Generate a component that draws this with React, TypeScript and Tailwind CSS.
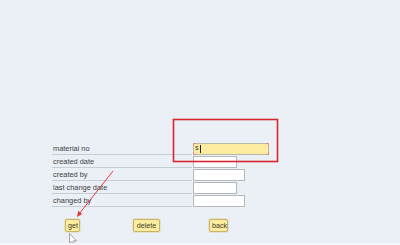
import React from "react"

const rows = [
  { label: "material no", w: "w-[76px]", value: "s", active: true },
  { label: "created date", w: "w-[44px]", value: "" },
  { label: "created by", w: "w-[52px]", value: "" },
  { label: "last change date", w: "w-[44px]", value: "" },
  { label: "changed by", w: "w-[52px]", value: "" },
]

function Corner(props: { className: string }) {
  return <span className={"absolute w-[3px] h-[3px] border-[#e28a8a] " + props.className} />
}

function Btn(props: { label: string; className: string }) {
  return (
    <button className={"h-[13px] px-[2px] bg-[#fcec9e] border border-[#c7b36c] rounded-[2px] shadow-[0_0_0_1px_#e6e2cf] text-[7.2px] leading-[11px] text-[#3a3a2a] " + props.className}>
      {props.label}
    </button>
  )
}

export default function App() {
  return (
    <div className="relative w-[400px] h-[245px] bg-[#eaf0f6] overflow-hidden border-b-2 border-[#f4f7fa]" style={{ fontFamily: '"Liberation Sans", Arial, sans-serif' }}>
      <div className="pt-[142px] pl-[52px]">
        {rows.map((r, i) => (
          <div key={i} className="flex items-center h-[13px]">
            <div className="w-[140px] h-[13px] border-b border-[#c6cdd5] pl-[1px] text-[7.4px] leading-[13px] text-[#404040]">
              {r.label}
            </div>
            <div className="ml-[1px] relative">
              {r.active ? (
                <div className={"relative h-[12px] " + r.w + " bg-[#fdec9f] border border-[#b9b9a8] flex items-center pl-[1px] text-[7.3px] text-[#333]"}>
                  <span>s</span>
                  <span className="w-[1px] h-[8px] bg-[#222] ml-[1px]" />
                  <Corner className="-left-[1px] -top-[1px] border-l border-t" />
                  <Corner className="-right-[1px] -top-[1px] border-r border-t" />
                  <Corner className="-left-[1px] -bottom-[1px] border-l border-b" />
                  <Corner className="-right-[1px] -bottom-[1px] border-r border-b" />
                </div>
              ) : (
                <input readOnly value={r.value} className={"block h-[12px] " + r.w + " bg-white border border-[#b4b8bd] outline-none"} />
              )}
            </div>
          </div>
        ))}

        <div className="flex items-start mt-[12px]">
          <Btn label="get" className="ml-[13px] w-[15px]" />
          <Btn label="delete" className="ml-[53px] w-[27px]" />
          <Btn label="back" className="ml-[49px] w-[19px]" />
        </div>
      </div>

      {/* annotation box and arrow */}
      <svg className="absolute left-0 top-0 pointer-events-none" width="400" height="245">
        <rect x="173.5" y="119.5" width="104" height="42" fill="none" stroke="#d9262c" strokeWidth="1.6" />
        <line x1="113" y1="171" x2="79" y2="214" stroke="#e3393b" strokeWidth="1" />
        <path d="M77 217 L78.2 210.8 L82.2 213.9 Z" fill="#e3393b" />
      </svg>

      {/* mouse cursor */}
      <svg className="absolute left-[69px] top-[233px]" width="9" height="13" viewBox="0 0 9 13">
        <path d="M0.5 0.5 L0.5 10.5 L2.8 8.4 L4.6 12.3 L6 11.6 L4.3 7.8 L7.5 7.8 Z" fill="#fff" stroke="#8a8a8a" strokeWidth="0.8" />
      </svg>
    </div>
  )
}
